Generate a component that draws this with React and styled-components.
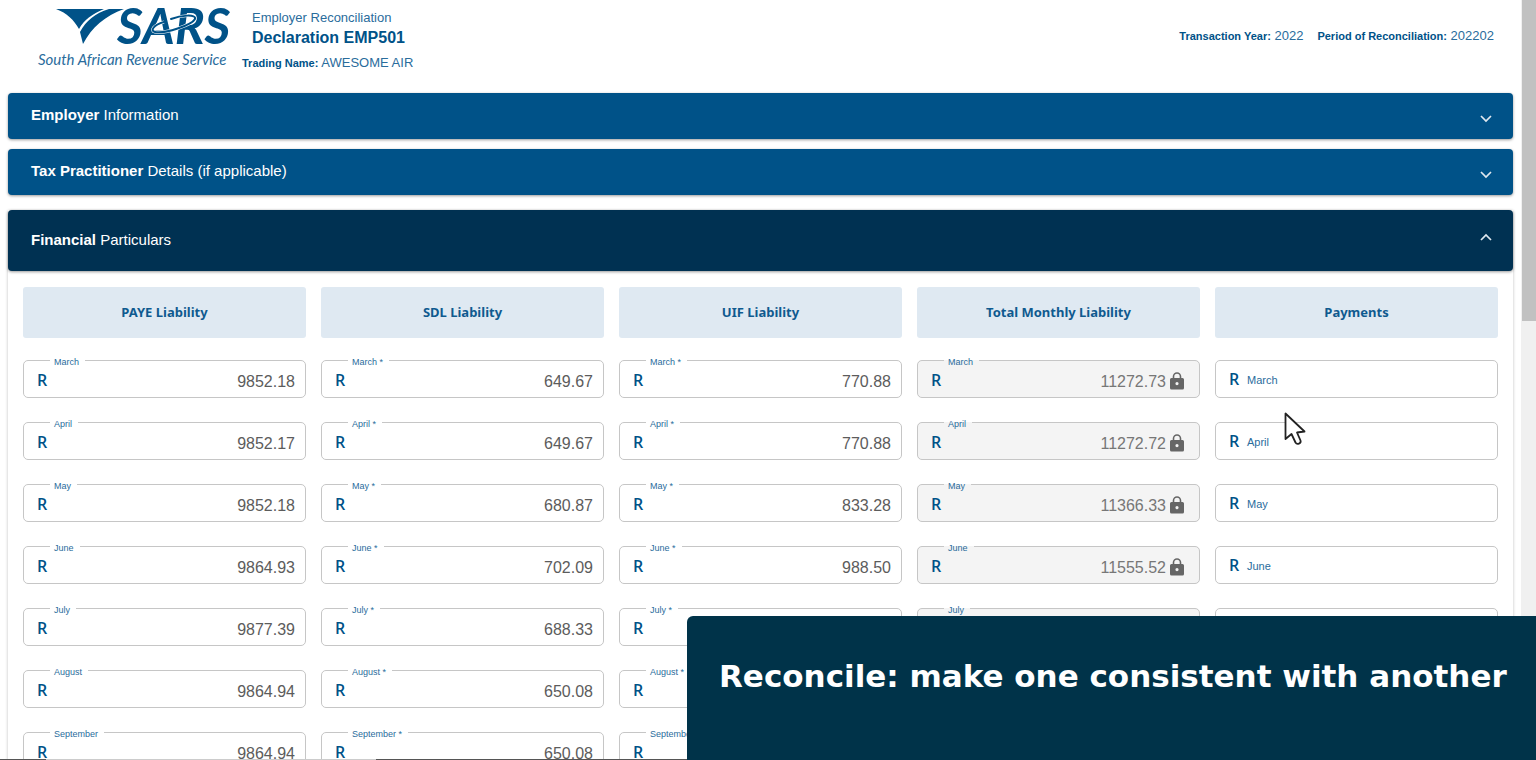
import styled, { createGlobalStyle } from 'styled-components';

const MONTHS = ['March', 'April', 'May', 'June', 'July', 'August', 'September'];

const COLUMNS = [
  {
    id: 'paye',
    title: 'PAYE Liability',
    values: ['9852.18', '9852.17', '9852.18', '9864.93', '9877.39', '9864.94', '9864.94'],
  },
  {
    id: 'sdl',
    title: 'SDL Liability',
    required: true,
    values: ['649.67', '649.67', '680.87', '702.09', '688.33', '650.08', '650.08'],
  },
  {
    id: 'uif',
    title: 'UIF Liability',
    required: true,
    values: ['770.88', '770.88', '833.28', '988.50', '', '', ''],
  },
  {
    id: 'total',
    title: 'Total Monthly Liability',
    locked: true,
    values: ['11272.73', '11272.72', '11366.33', '11555.52', '', '', ''],
  },
  { id: 'payments', title: 'Payments', empty: true },
];

const Logo = () => (
  <LogoSvg viewBox="0 0 200 66" role="img" aria-label="SARS South African Revenue Service">
    <path d="M18 4 H66 C54 9 46 15 41 24 C36 15 29 8 18 4 Z" fill="#005288" />
    <path d="M71 4 H86 C67 11 54 22 45 39 C44 35 43 31 42 27 C48 16 57 8 71 4 Z" fill="#005288" />
    <LogoName x="79" y="39">
      SARS
    </LogoName>
    <path
      d="M126 17 C115 20 112 26 117 27 C127 29 154 20 157 14 C159 9 143 10 133 14"
      fill="none"
      stroke="#fff"
      strokeWidth="3"
    />
    <path
      d="M126 17 C115 20 112 26 117 27 C127 29 154 20 157 14 C159 9 143 10 133 14"
      fill="none"
      stroke="#005288"
      strokeWidth="2"
      strokeLinecap="round"
    />
    <LogoTagline x="0" y="60">
      South African Revenue Service
    </LogoTagline>
  </LogoSvg>
);

const Chevron = ({ up }) => (
  <svg width="12" height="8" viewBox="0 0 12 8" aria-hidden="true">
    <path d={up ? 'M1 7 L6 2 L11 7' : 'M1 1 L6 6 L11 1'} fill="none" stroke="#dfe8ef" strokeWidth="1.7" />
  </svg>
);

const Lock = () => (
  <svg width="14" height="18" viewBox="0 0 14 18" aria-hidden="true">
    <path d="M3.5 7 V4.5 a3.5 3.5 0 0 1 7 0 V7" fill="none" stroke="#666" strokeWidth="1.6" />
    <path
      fillRule="evenodd"
      d="M1.5 6 h11 a1.5 1.5 0 0 1 1.5 1.5 v8.5 a1.5 1.5 0 0 1 -1.5 1.5 h-11 a1.5 1.5 0 0 1 -1.5 -1.5 v-8.5 a1.5 1.5 0 0 1 1.5 -1.5 z M7 10 a1.6 1.6 0 1 0 0 3.2 a1.6 1.6 0 1 0 0 -3.2 z"
      fill="#666"
    />
  </svg>
);

const AmountField = ({ column, month, value }) => {
  const id = `${column.id}-${month}`;

  if (column.empty) {
    return (
      <PlainField>
        <Currency>R</Currency>
        <PlainLabel htmlFor={id}>{month}</PlainLabel>
        <AmountInput id={id} defaultValue="" />
      </PlainField>
    );
  }

  return (
    <OutlinedField $locked={column.locked}>
      <FieldLegend>
        <label htmlFor={id}>
          {month}
          {column.required && ' *'}
        </label>
      </FieldLegend>
      <FieldContent>
        <Currency>R</Currency>
        <AmountInput id={id} defaultValue={value} readOnly={column.locked} $locked={column.locked} />
        {column.locked && <Lock />}
      </FieldContent>
    </OutlinedField>
  );
};

const App = () => (
  <>
    <GlobalStyle />
    <Screen>
      <Page>
        <Header>
          <Logo />
          <Titles>
            <FormName>Employer Reconciliation</FormName>
            <FormTitle>Declaration EMP501</FormTitle>
            <TradingName>
              <strong>Trading Name:</strong> <span>AWESOME AIR</span>
            </TradingName>
          </Titles>
          <Period>
            <div>
              <strong>Transaction Year:</strong> <span>2022</span>
            </div>
            <div>
              <strong>Period of Reconciliation:</strong> <span>202202</span>
            </div>
          </Period>
        </Header>

        <Sections>
          <SectionBar type="button">
            <span>
              <b>Employer</b> Information
            </span>
            <Chevron />
          </SectionBar>
          <SectionBar type="button">
            <span>
              <b>Tax Practitioner</b> Details (if applicable)
            </span>
            <Chevron />
          </SectionBar>
          <OpenSection>
            <SectionBar type="button" $open aria-expanded="true">
              <span>
                <b>Financial</b> Particulars
              </span>
              <Chevron up />
            </SectionBar>
            <AmountsTable>
              <thead>
                <tr>
                  {COLUMNS.map((column) => (
                    <HeadCell key={column.id} scope="col">
                      {column.title}
                    </HeadCell>
                  ))}
                </tr>
              </thead>
              <tbody>
                {MONTHS.map((month, row) => (
                  <tr key={month}>
                    {COLUMNS.map((column) => (
                      <Cell key={column.id}>
                        <AmountField column={column} month={month} value={column.values?.[row]} />
                      </Cell>
                    ))}
                  </tr>
                ))}
              </tbody>
            </AmountsTable>
          </OpenSection>
        </Sections>
      </Page>
      <ScrollTrack>
        <ScrollThumb />
      </ScrollTrack>
      <PlayerLine />
      <Caption>Reconcile: make one consistent with another</Caption>
      <Pointer viewBox="0 0 22 34" aria-hidden="true">
        <path
          d="M1.5 1.5 V27 L7.5 22 L11.5 30.5 C13 33 17.5 31.5 16.5 28.5 L13 20.5 L20.5 19.5 Z"
          fill="#fff"
          stroke="#222"
          strokeWidth="1.8"
          strokeLinejoin="round"
        />
      </Pointer>
    </Screen>
  </>
);

export default App;

const GlobalStyle = createGlobalStyle`
  * {
    box-sizing: border-box;
  }
  body {
    margin: 0;
    background: #fff;
    color: #005288;
    font-family: 'Liberation Sans', Arial, sans-serif;
  }
`;

const Screen = styled.div`
  position: relative;
  display: grid;
  grid-template-columns: minmax(0, 1fr) 15px;
  height: 100vh;
  overflow: hidden;
`;

const Page = styled.main`
  padding: 0 8px;
  overflow: hidden;
`;

const Header = styled.header`
  display: flex;
  align-items: flex-start;
  height: 93px;
  padding: 5px 19px 0 30px;
`;

const LogoSvg = styled.svg`
  flex: none;
  width: 200px;
  height: 66px;
  overflow: visible;
`;

const LogoName = styled.text`
  font: italic 700 50px Lato, sans-serif;
  fill: #005288;
`;

const LogoTagline = styled.text`
  font: italic 400 15px Lato, sans-serif;
  fill: #2a6c9c;
`;

const Titles = styled.div`
  margin-left: 4px;
  line-height: 20px;
`;

const FormName = styled.div`
  padding: 4px 0 0 10px;
  font-size: 13px;
  line-height: 18px;
  color: #2a6c9c;
`;

const FormTitle = styled.h1`
  margin: 0;
  padding-left: 10px;
  font-size: 16px;
  line-height: 22px;
`;

const TradingName = styled.div`
  margin-top: 4px;
  font-size: 13px;

  strong {
    font-size: 11px;
  }
  span {
    color: #2a6c9c;
  }
`;

const Period = styled.div`
  display: flex;
  gap: 14px;
  margin: 21px 0 0 auto;
  font-size: 13px;
  line-height: 20px;

  strong {
    font-size: 11px;
  }
  span {
    color: #2a6c9c;
  }
`;

const Sections = styled.div`
  display: flex;
  flex-direction: column;
  gap: 10px;
`;

const SectionBar = styled.button`
  display: flex;
  align-items: center;
  justify-content: space-between;
  width: 100%;
  height: ${(props) => (props.$open ? '61px' : '46px')};
  padding: 0 21px 2px 23px;
  border: 0;
  border-radius: 4px;
  background: ${(props) => (props.$open ? '#003152' : '#005288')};
  box-shadow: 0 1px 3px rgba(0, 0, 0, 0.4);
  color: #fff;
  font-family: inherit;
  font-size: 15px;
  line-height: 20px;
  text-align: left;

  svg {
    margin-top: ${(props) => (props.$open ? '-6px' : '8px')};
  }
`;

const OpenSection = styled.section`
  margin-top: 5px;
  box-shadow: 0 1px 3px rgba(0, 0, 0, 0.25);
`;

const AmountsTable = styled.table`
  width: 100%;
  margin-top: 16px;
  table-layout: fixed;
  border-collapse: separate;
  border-spacing: 15px 0;
`;

const HeadCell = styled.th`
  height: 51px;
  padding: 0 0 2px;
  border-radius: 3px;
  background: #dfe9f2;
  color: #0f5a8f;
  font-family: 'Noto Sans', sans-serif;
  font-size: 13px;
  font-weight: 700;
`;

const Cell = styled.td`
  padding: 15px 0 2px;
  vertical-align: bottom;
`;

const OutlinedField = styled.fieldset`
  min-width: 0;
  height: 45px;
  margin: 0;
  padding: 0;
  border: 1px solid #c6c6c6;
  border-radius: 5px;
  background: ${(props) => (props.$locked ? '#f4f4f4' : '#fff')};
`;

const FieldLegend = styled.legend`
  height: 14px;
  margin-left: 26px;
  padding: 3px 6px 0 4px;
  font-size: 9px;
  line-height: 13px;
  color: #2a6c9c;
`;

const FieldContent = styled.div`
  display: flex;
  align-items: center;
  height: 27px;
  padding: 0 15px 0 13px;
`;

const PlainField = styled.div`
  display: flex;
  align-items: center;
  height: 38px;
  padding: 2px 10px 0 13px;
  border: 1px solid #c6c6c6;
  border-radius: 5px;
`;

const Currency = styled.span`
  width: 10px;
  padding-bottom: 2px;
  font-family: 'Open Sans', sans-serif;
  font-size: 16px;
  font-weight: 600;
  line-height: 20px;
`;

const PlainLabel = styled.label`
  margin-left: 8px;
  font-size: 11px;
  color: #2a6c9c;
`;

const AmountInput = styled.input`
  flex: 1;
  min-width: 0;
  height: 22px;
  padding: 2px 0 0;
  margin-right: ${(props) => (props.$locked ? '4px' : '-5px')};
  border: 0;
  outline: 0;
  background: transparent;
  color: ${(props) => (props.$locked ? '#777' : '#5c5c5c')};
  font-family: inherit;
  font-size: 16px;
  text-align: right;
`;

const ScrollTrack = styled.div`
  background: #f0f0f0;
`;

const ScrollThumb = styled.div`
  height: 321px;
  margin-left: 1px;
  background: #c1c1c1;
`;

const PlayerLine = styled.div`
  position: absolute;
  left: 0;
  right: 0;
  bottom: 0;
  height: 1px;
  background: linear-gradient(90deg, #555 46px, #ccc 46px, #ccc 376px, #555 376px);
`;

const Caption = styled.div`
  position: absolute;
  right: 0;
  bottom: 0;
  width: 849px;
  height: 144px;
  padding: 40px 0 0 32px;
  border-radius: 6px 0 0 0;
  background: #003349;
  color: #fff;
  font-family: 'DejaVu Sans', sans-serif;
  font-size: 31px;
  font-weight: 700;
  line-height: 40px;
  white-space: nowrap;
`;

const Pointer = styled.svg`
  position: absolute;
  left: 1284px;
  top: 412px;
  width: 22px;
  height: 34px;
`;
